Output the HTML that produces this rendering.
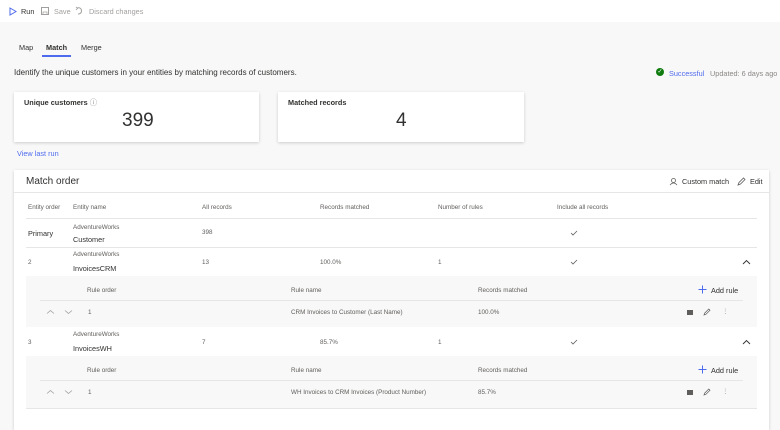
<!DOCTYPE html>
<html><head><style>
*{margin:0;padding:0;box-sizing:border-box}
body{width:780px;height:417px;overflow:hidden;background:#f8f8f8;font-family:"Liberation Sans",sans-serif;color:#323130;position:relative}
.a{position:absolute;white-space:nowrap}
.s{font-size:6.3px;color:#605e5c}
.t{font-size:7.3px}
.card{position:absolute;background:#fff;box-shadow:0 1px 3px rgba(0,0,0,.18)}
.ln{position:absolute;height:1px;background:#e6e6e6}
</style></head><body>
<div class="a" style="left:0;top:0;width:780px;height:22px;background:#fff"></div>
<svg class="a" style="left:9px;top:7px" width="8" height="9"><path d="M1 1 L7 4.5 L1 8 Z" fill="none" stroke="#4f6bed" stroke-width="1"/></svg>
<div class="a t" style="left:21px;top:7px">Run</div>
<svg class="a" style="left:41px;top:7px" width="8" height="8"><rect x="0.5" y="0.5" width="7" height="7" fill="none" stroke="#a19f9d"/><rect x="2" y="5" width="4" height="2.5" fill="none" stroke="#a19f9d" stroke-width=".7"/></svg>
<div class="a t" style="left:54px;top:7px;color:#a19f9d">Save</div>
<svg class="a" style="left:75px;top:6px" width="8" height="9"><path d="M2 2 Q6 1 6.5 4.5 Q6.5 8 3 8" fill="none" stroke="#a19f9d"/><path d="M1 1 L2.5 2.5 L1 4" fill="none" stroke="#a19f9d" stroke-width=".8"/></svg>
<div class="a t" style="left:89px;top:7px;color:#a19f9d">Discard changes</div>

<div class="a t" style="left:19px;top:43px">Map</div>
<div class="a t" style="left:46px;top:43px;font-weight:bold">Match</div>
<div class="a" style="left:42px;top:55px;width:29px;height:2px;background:#4f6bed"></div>
<div class="a t" style="left:81px;top:43px">Merge</div>
<div class="a" style="left:14px;top:68px;font-size:8px">Identify the unique customers in your entities by matching records of customers.</div>
<div class="a" style="left:656px;top:68px;width:8px;height:8px;border-radius:50%;background:#107c10;color:#fff;font-size:6px;text-align:center;line-height:8px">✓</div>
<div class="a t" style="left:669px;top:69px;color:#4f6bed">Successful</div>
<div class="a t" style="left:710px;top:69px;color:#8a8886">Updated: 6 days ago</div>

<div class="card" style="left:14px;top:92px;width:245px;height:50px"></div>
<div class="a t" style="left:24px;top:98px;font-weight:bold">Unique customers <span style="font-weight:normal;color:#8a8886">ⓘ</span></div>
<div class="a" style="left:122px;top:110px;font-size:19px">399</div>
<div class="card" style="left:278px;top:92px;width:246px;height:50px"></div>
<div class="a t" style="left:288px;top:98px;font-weight:bold">Matched records</div>
<div class="a" style="left:396px;top:110px;font-size:19px">4</div>
<div class="a t" style="left:17px;top:149px;color:#4f6bed">View last run</div>

<div class="card" style="left:14px;top:170px;width:755px;height:260px"></div>
<div class="a" style="left:26px;top:176px;font-size:10px">Match order</div>
<div class="ln" style="left:14px;top:192px;width:755px"></div>
<svg class="a" style="left:669px;top:177px" width="9" height="9"><circle cx="4.5" cy="3.5" r="2" fill="none" stroke="#605e5c" stroke-width=".8"/><path d="M1 8 Q4.5 4 8 8" fill="none" stroke="#605e5c" stroke-width=".8"/></svg>
<div class="a t" style="left:682px;top:177px">Custom match</div>
<svg class="a" style="left:737px;top:177px" width="9" height="9"><path d="M1 8 L2 5.5 L6.5 1 L8 2.5 L3.5 7 Z" fill="none" stroke="#605e5c" stroke-width=".8"/></svg>
<div class="a t" style="left:750px;top:177px">Edit</div>

<div class="a s" style="left:28px;top:204px">Entity order</div>
<div class="a s" style="left:73px;top:204px">Entity name</div>
<div class="a s" style="left:202px;top:204px">All records</div>
<div class="a s" style="left:320px;top:204px">Records matched</div>
<div class="a s" style="left:438px;top:204px">Number of rules</div>
<div class="a s" style="left:557px;top:204px">Include all records</div>
<div class="ln" style="left:26px;top:218px;width:731px"></div>

<div class="a t" style="left:28px;top:229px">Primary</div>
<div class="a s" style="left:73px;top:224px">AdventureWorks</div>
<div class="a t" style="left:73px;top:235px">Customer</div>
<div class="a s" style="left:202px;top:229px">398</div>
<svg class="a" style="left:570px;top:230px" width="8" height="6"><path d="M1 3 L3 5 L7 1" fill="none" stroke="#605e5c" stroke-width=".8"/></svg>
<div class="ln" style="left:26px;top:247px;width:731px"></div>

<div class="a s" style="left:28px;top:259px">2</div>
<div class="a s" style="left:73px;top:251px">AdventureWorks</div>
<div class="a t" style="left:73px;top:264px">InvoicesCRM</div>
<div class="a s" style="left:202px;top:259px">13</div>
<div class="a s" style="left:320px;top:259px">100.0%</div>
<div class="a s" style="left:438px;top:259px">1</div>
<svg class="a" style="left:570px;top:259px" width="8" height="6"><path d="M1 3 L3 5 L7 1" fill="none" stroke="#605e5c" stroke-width=".8"/></svg>
<svg class="a" style="left:742px;top:259px" width="9" height="6"><path d="M1 5 L4.5 1.5 L8 5" fill="none" stroke="#323130" stroke-width=".9"/></svg>

<div class="a" style="left:26px;top:276px;width:731px;height:51px;background:#f8f8f8"></div>
<div class="a s" style="left:87px;top:287px">Rule order</div>
<div class="a s" style="left:291px;top:287px">Rule name</div>
<div class="a s" style="left:478px;top:287px">Records matched</div>
<svg class="a" style="left:698px;top:285px" width="9" height="9"><path d="M4.5 0.5 V8.5 M0.5 4.5 H8.5" stroke="#4f6bed" stroke-width="1"/></svg>
<div class="a t" style="left:711px;top:286px">Add rule</div>
<div class="ln" style="left:40px;top:300px;width:703px"></div>
<svg class="a" style="left:46px;top:309px" width="28" height="6"><path d="M1 4.5 L4.5 1.5 L8 4.5 M19 1.5 L22.5 4.5 L26 1.5" fill="none" stroke="#a19f9d" stroke-width=".8"/></svg>
<div class="a s" style="left:88px;top:309px">1</div>
<div class="a s" style="left:291px;top:309px">CRM Invoices to Customer (Last Name)</div>
<div class="a s" style="left:478px;top:309px">100.0%</div>
<div class="a" style="left:687px;top:310px;width:6px;height:5px;background:#605e5c"></div>
<svg class="a" style="left:703px;top:308px" width="8" height="8"><path d="M1 7 L1.8 5 L5.8 1 L7 2.2 L3 6.2 Z" fill="none" stroke="#605e5c" stroke-width=".7"/></svg>
<div class="a s" style="left:722px;top:308px;color:#a19f9d">⋮</div>

<div class="a s" style="left:28px;top:339px">3</div>
<div class="a s" style="left:73px;top:331px">AdventureWorks</div>
<div class="a t" style="left:73px;top:344px">InvoicesWH</div>
<div class="a s" style="left:202px;top:339px">7</div>
<div class="a s" style="left:320px;top:339px">85.7%</div>
<div class="a s" style="left:438px;top:339px">1</div>
<svg class="a" style="left:570px;top:339px" width="8" height="6"><path d="M1 3 L3 5 L7 1" fill="none" stroke="#605e5c" stroke-width=".8"/></svg>
<svg class="a" style="left:742px;top:339px" width="9" height="6"><path d="M1 5 L4.5 1.5 L8 5" fill="none" stroke="#323130" stroke-width=".9"/></svg>

<div class="a" style="left:26px;top:356px;width:731px;height:52px;background:#f8f8f8"></div>
<div class="a s" style="left:87px;top:367px">Rule order</div>
<div class="a s" style="left:291px;top:367px">Rule name</div>
<div class="a s" style="left:478px;top:367px">Records matched</div>
<svg class="a" style="left:698px;top:365px" width="9" height="9"><path d="M4.5 0.5 V8.5 M0.5 4.5 H8.5" stroke="#4f6bed" stroke-width="1"/></svg>
<div class="a t" style="left:711px;top:366px">Add rule</div>
<div class="ln" style="left:40px;top:380px;width:703px"></div>
<svg class="a" style="left:46px;top:389px" width="28" height="6"><path d="M1 4.5 L4.5 1.5 L8 4.5 M19 1.5 L22.5 4.5 L26 1.5" fill="none" stroke="#a19f9d" stroke-width=".8"/></svg>
<div class="a s" style="left:88px;top:389px">1</div>
<div class="a s" style="left:291px;top:389px">WH Invoices to CRM Invoices (Product Number)</div>
<div class="a s" style="left:478px;top:389px">85.7%</div>
<div class="a" style="left:687px;top:390px;width:6px;height:5px;background:#605e5c"></div>
<svg class="a" style="left:703px;top:388px" width="8" height="8"><path d="M1 7 L1.8 5 L5.8 1 L7 2.2 L3 6.2 Z" fill="none" stroke="#605e5c" stroke-width=".7"/></svg>
<div class="a s" style="left:722px;top:388px;color:#a19f9d">⋮</div>
<div class="ln" style="left:26px;top:408px;width:731px"></div>
</body></html>
